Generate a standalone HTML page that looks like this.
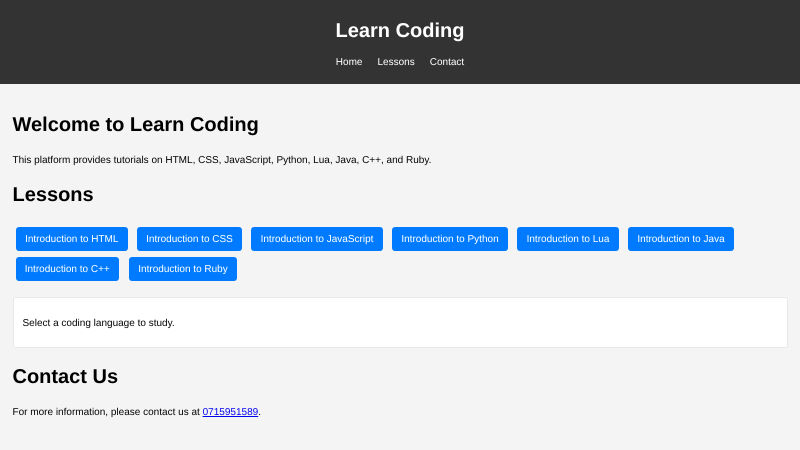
<!DOCTYPE html>
<html lang="en">
<head>
<meta charset="utf-8">
<title>Learn Coding</title>
<style>
html,body{margin:0;padding:0;width:800px;height:450px;overflow:hidden;background:#f4f4f4}
#page{position:absolute;left:0;top:0;width:800px;height:450px;background:#f4f4f4;font-family:"Liberation Sans",Arial,sans-serif;font-size:10px;color:#000;line-height:normal;text-rendering:geometricPrecision;filter:blur(.3px)}
header{background:#333;color:#fff;height:83.5px;text-align:center;box-sizing:border-box;padding-top:19px}
header h1{margin:0;font-size:20px;font-weight:bold;line-height:24px}
nav{margin-top:13px;line-height:14px;font-size:0}
nav a{color:#fff;text-decoration:none;font-size:10px;margin:0 7.5px}
h2{margin:0;font-weight:bold;font-size:20px;line-height:24px;position:absolute;left:12.5px}
p{margin:0;position:absolute;left:12.5px;line-height:14px}
.btn{position:absolute;height:24px;line-height:25.5px;background:#007bff;color:#fff;border-radius:3px;font-size:10px;text-align:center;box-sizing:border-box;white-space:nowrap}
.box{position:absolute;left:12.5px;top:297px;width:775px;height:51px;background:#fff;border:1px solid #e8e8e8;border-radius:3px;box-sizing:border-box}
.box span{position:absolute;left:9px;top:18.5px;line-height:14px}
a.tel{color:#0000ee;text-decoration:underline}
</style>
</head>
<body>
<div id="page">
<header>
<h1>Learn Coding</h1>
<nav><a href="#">Home</a><a href="#">Lessons</a><a href="#">Contact</a></nav>
</header>
<h2 style="top:113px">Welcome to Learn Coding</h2>
<p style="top:153.5px">This platform provides tutorials on HTML, CSS, JavaScript, Python, Lua, Java, C++, and Ruby.</p>
<h2 style="top:183px">Lessons</h2>
<div class="btn" style="left:15.5px;top:227px;width:112.5px">Introduction to HTML</div>
<div class="btn" style="left:137px;top:227px;width:105px">Introduction to CSS</div>
<div class="btn" style="left:251px;top:227px;width:132px">Introduction to JavaScript</div>
<div class="btn" style="left:392px;top:227px;width:116px">Introduction to Python</div>
<div class="btn" style="left:517px;top:227px;width:102px">Introduction to Lua</div>
<div class="btn" style="left:628px;top:227px;width:106px">Introduction to Java</div>
<div class="btn" style="left:15.5px;top:257px;width:103.5px">Introduction to C++</div>
<div class="btn" style="left:129px;top:257px;width:108px">Introduction to Ruby</div>
<div class="box"><span>Select a coding language to study.</span></div>
<h2 style="top:365px">Contact Us</h2>
<p style="top:405.5px">For more information, please contact us at <a class="tel" href="#">0715951589</a>.</p>
</div>
</body>
</html>
